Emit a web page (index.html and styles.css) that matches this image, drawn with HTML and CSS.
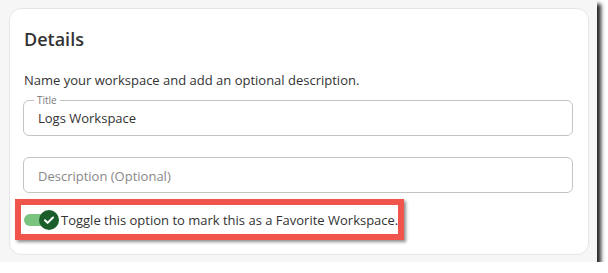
FILE: index.html
```html
<!DOCTYPE html>
<html>
<head>
<meta charset="utf-8">
<link rel="stylesheet" href="styles.css">
</head>
<body>
<div class="screen">
  <div class="card">
    <h2 class="title">Details</h2>
    <p class="intro">Name your workspace and add an optional description.</p>
    <fieldset class="field filled">
      <legend class="legend">Title</legend>
      <span class="value">Logs Workspace</span>
    </fieldset>
    <div class="field empty">
      <span class="placeholder">Description (Optional)</span>
    </div>
    <div class="highlight">
      <span class="toggle">
        <span class="track"></span>
        <span class="knob">
          <svg width="18" height="18" viewBox="0 0 18 18"><path d="M5 9.3l2.6 2.6L13 6.5" fill="none" stroke="#fff" stroke-width="2" stroke-linecap="round" stroke-linejoin="round"/></svg>
        </span>
      </span>
      <span class="label">Toggle this option to mark this as a Favorite Workspace.</span>
    </div>
  </div>
</div>
</body>
</html>
```
FILE: styles.css
```css
* { box-sizing: border-box; }
html, body { margin: 0; padding: 0; background: #ffffff; }
body { font-family: "Open Sans", "Noto Sans", sans-serif; color: #333; }
.screen {
  width: 597px;
  height: 262px;
  background: #f6f6f6;
  box-shadow: 4px 4px 4px rgba(0,0,0,0.85);
  padding: 8px 0 0 9px;
}
.card {
  width: 580px;
  height: 247px;
  background: #fff;
  border: 1px solid #e6e6e6;
  border-radius: 12px;
  padding: 0 15px 0 13px;
  display: flex;
  flex-direction: column;
}
.title {
  margin: 18px 0 0 1px;
  font-size: 18px;
  font-weight: 600;
  line-height: 24px;
  color: #333;
}
.intro {
  margin: 20px 0 0 1px;
  font-size: 13px;
  line-height: 18px;
}
.field {
  border: 1px solid #c4c4c4;
  border-radius: 6px;
  margin: 0;
  height: 36px;
  display: flex;
  align-items: center;
  padding: 0 14px;
  font-size: 13px;
}
.filled {
  margin-top: 7px;
  padding: 0 14px;
  height: 40px;
  display: block;
  min-width: 0;
}
.legend {
  font-size: 10px;
  color: #777;
  padding: 0 3px;
  margin-left: -4px;
  line-height: 8px;
}
.value { display: block; line-height: 18px; margin-top: 5px; color: #333; }
.empty { margin-top: 21px; padding-top: 2px; }
.placeholder { color: #888; }
.highlight {
  margin: 6px 0 0 -8px;
  width: 389px;
  height: 41px;
  border: 6px solid #f0544b;
  box-shadow: 2px 2px 3px rgba(0,0,0,0.45);
  display: flex;
  align-items: center;
  padding-left: 3px;
  font-size: 13px;
  white-space: nowrap;
}
.toggle { position: relative; width: 36px; height: 20px; display: inline-block; flex: none; }
.track {
  position: absolute; left: 0; top: 4px;
  width: 30px; height: 12px; border-radius: 6px;
  background: #79c47f;
}
.knob {
  position: absolute; left: 15px; top: 0;
  width: 20px; height: 20px; border-radius: 50%;
  background: #1b5e2b;
  display: flex; align-items: center; justify-content: center;
}
.knob svg { display: block; }
.label { margin-left: 1px; color: #333; }
```
